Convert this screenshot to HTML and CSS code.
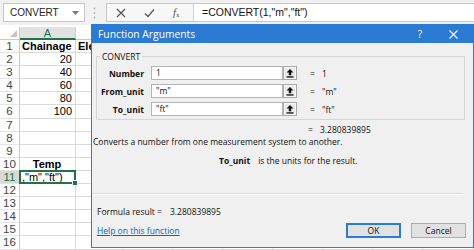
FILE: index.html
```html
<!DOCTYPE html>
<html>
<head>
<meta charset="utf-8">
<link rel="stylesheet" href="styles.css">
</head>
<body>
<div class="app">
  <div class="toolbar">
    <div class="namebox">
      <span class="nb-text">CONVERT</span>
      <svg class="caret" width="7" height="4" viewBox="0 0 7 4"><path d="M0 0H7L3.5 4Z" fill="#7a7a7a"/></svg>
    </div>
    <svg class="grip" width="3" height="12" viewBox="0 0 3 12"><circle cx="1.5" cy="1.5" r="0.9" fill="#b0b0b0"/><circle cx="1.5" cy="6" r="0.9" fill="#b0b0b0"/><circle cx="1.5" cy="10.5" r="0.9" fill="#b0b0b0"/></svg>
    <div class="fbar">
      <div class="fbtns">
        <svg class="fb-x" width="10" height="10" viewBox="0 0 10 10"><path d="M1 1L9 9M9 1L1 9" stroke="#555" stroke-width="1.2"/></svg>
        <svg class="fb-ok" width="11" height="10" viewBox="0 0 11 10"><path d="M1 5.5L4 8.5L10 1.5" stroke="#555" stroke-width="1.2" fill="none"/></svg>
        <span class="fx"><i>f</i><sub>x</sub></span>
      </div>
      <div class="formula">=CONVERT(1,"m","ft")</div>
    </div>
  </div>

  <div class="sheet">
    <div class="row head">
      <div class="corner"><svg width="7" height="7" viewBox="0 0 7 7"><path d="M7 0V7H0Z" fill="#c4c4c4"/></svg></div>
      <div class="ch ca selcol">A</div>
      <div class="ch cb"></div>
      <div class="rest"></div>
    </div>
    <div class="row"><div class="rh">1</div><div class="cell ca bold">Chainage</div><div class="cell cb bold">Ele</div><div class="rest"></div></div>
    <div class="row"><div class="rh">2</div><div class="cell ca num">20</div><div class="cell cb"></div><div class="rest"></div></div>
    <div class="row"><div class="rh">3</div><div class="cell ca num">40</div><div class="cell cb"></div><div class="rest"></div></div>
    <div class="row"><div class="rh">4</div><div class="cell ca num">60</div><div class="cell cb"></div><div class="rest"></div></div>
    <div class="row"><div class="rh">5</div><div class="cell ca num">80</div><div class="cell cb"></div><div class="rest"></div></div>
    <div class="row"><div class="rh">6</div><div class="cell ca num">100</div><div class="cell cb"></div><div class="rest"></div></div>
    <div class="row"><div class="rh">7</div><div class="cell ca"></div><div class="cell cb"></div><div class="rest"></div></div>
    <div class="row"><div class="rh">8</div><div class="cell ca"></div><div class="cell cb"></div><div class="rest"></div></div>
    <div class="row"><div class="rh">9</div><div class="cell ca"></div><div class="cell cb"></div><div class="rest"></div></div>
    <div class="row"><div class="rh">10</div><div class="cell ca bold center">Temp</div><div class="cell cb"></div><div class="rest"></div></div>
    <div class="row"><div class="rh selrow">11</div><div class="cell ca sel">,"m","ft")</div><div class="cell cb"></div><div class="rest"></div></div>
    <div class="row"><div class="rh">12</div><div class="cell ca"></div><div class="cell cb"></div><div class="rest"></div></div>
    <div class="row"><div class="rh">13</div><div class="cell ca"></div><div class="cell cb"></div><div class="rest"></div></div>
    <div class="row"><div class="rh">14</div><div class="cell ca"></div><div class="cell cb"></div><div class="rest"></div></div>
    <div class="row"><div class="rh">15</div><div class="cell ca"></div><div class="cell cb"></div><div class="rest"></div></div>
    <div class="row"><div class="rh">16</div><div class="cell ca"></div><div class="cell cb"></div><div class="rest"></div></div>
  </div>

  <div class="dialog">
    <div class="titlebar">
      <span class="title">Function Arguments</span>
      <span class="tbtn">?</span>
      <span class="tbtn"><svg width="9" height="9" viewBox="0 0 9 9"><path d="M0.5 0.5L8.5 8.5M8.5 0.5L0.5 8.5" stroke="#fff" stroke-width="1.1"/></svg></span>
    </div>
    <div class="dbody">
      <fieldset class="group">
        <legend>CONVERT</legend>
        <div class="args">
          <div class="alabel">Number</div>
          <div class="ainput">1</div>
          <div class="refbtn"><svg width="8" height="9" viewBox="0 0 8 9"><path d="M4 0L7.5 3.6H5.2V6.2H2.8V3.6H0.5Z" fill="#111"/><rect x="0.5" y="7.3" width="7" height="1.3" fill="#111"/></svg></div>
          <div class="aval"><span class="eq">=</span>1</div>

          <div class="alabel">From_unit</div>
          <div class="ainput">"m"</div>
          <div class="refbtn"><svg width="8" height="9" viewBox="0 0 8 9"><path d="M4 0L7.5 3.6H5.2V6.2H2.8V3.6H0.5Z" fill="#111"/><rect x="0.5" y="7.3" width="7" height="1.3" fill="#111"/></svg></div>
          <div class="aval"><span class="eq">=</span>"m"</div>

          <div class="alabel">To_unit</div>
          <div class="ainput">"ft"</div>
          <div class="refbtn"><svg width="8" height="9" viewBox="0 0 8 9"><path d="M4 0L7.5 3.6H5.2V6.2H2.8V3.6H0.5Z" fill="#111"/><rect x="0.5" y="7.3" width="7" height="1.3" fill="#111"/></svg></div>
          <div class="aval"><span class="eq">=</span>"ft"</div>
        </div>
      </fieldset>
      <div class="total"><span class="eq">=</span>3.280839895</div>
      <div class="desc">Converts a number from one measurement system to another.</div>
      <div class="pdesc"><b>To_unit</b>is the units for the result.</div>
      <div class="sep"></div>
      <div class="fresult"><span class="frl">Formula result =</span>3.280839895</div>
      <div class="footer">
        <a class="help">Help on this function</a>
        <div class="btns">
          <button class="btn default">OK</button>
          <button class="btn">Cancel</button>
        </div>
      </div>
    </div>
  </div>
</div>
</body>
</html>
```

FILE: styles.css
```css
html, body {
  margin: 0;
  padding: 0;
  background: #ffffff;
}
.app {
  position: relative;
  width: 474px;
  height: 250px;
  overflow: hidden;
  font-family: "Liberation Sans", Arial, sans-serif;
}

/* ---------- formula toolbar ---------- */
.toolbar {
  height: 25px;
  background: #f1f1f1;
  display: flex;
  align-items: flex-start;
  padding-top: 3px;
  box-sizing: border-box;
}
.namebox {
  margin-left: 3px;
  width: 82px;
  height: 19px;
  box-sizing: border-box;
  border: 1px solid #c6c6c6;
  background: #fff;
  display: flex;
  align-items: center;
  padding: 0 5px 0 6px;
}
.nb-text {
  flex: 1;
  font-size: 10px;
  color: #222;
}
.grip {
  margin: 4px 0 0 8px;
}
.fbar {
  margin-left: 10px;
  flex: 1;
  height: 19px;
  box-sizing: border-box;
  border: 1px solid #c6c6c6;
  border-right: none;
  background: #fff;
  display: flex;
}
.fbtns {
  width: 86px;
  display: flex;
  align-items: center;
  padding-left: 9px;
  box-sizing: border-box;
  background: #f7f7f7;
}
.fb-x { margin-right: 18px; }
.fb-ok { margin-right: 18px; }
.fx {
  font-family: "Liberation Serif", serif;
  font-size: 11px;
  color: #555;
}
.fx sub { font-size: 7px; vertical-align: -1px; }
.formula {
  flex: 1;
  border-left: 1px solid #d4d4d4;
  padding-left: 8px;
  font-size: 10.5px;
  line-height: 17px;
  color: #111;
}

/* ---------- sheet ---------- */
.sheet {
  padding-top: 2px;
}
.row {
  display: flex;
  height: 13.1px;
}
.row.head {
  height: 13px;
}
.corner {
  width: 20px;
  flex: none;
  box-sizing: border-box;
  border-right: 1px solid #c8c8c8;
  border-bottom: 1px solid #c8c8c8;
  display: flex;
  align-items: flex-end;
  justify-content: flex-end;
  padding: 0 2px 2px 0;
}
.corner svg { display: block; }
.ch {
  box-sizing: border-box;
  border-right: 1px solid #d4d4d4;
  border-bottom: 1px solid #c8c8c8;
  text-align: center;
  font-size: 11px;
  line-height: 12px;
  color: #444;
  flex: none;
}
.ch.selcol {
  background: #e1e1e1;
  color: #217346;
  border-bottom: 2px solid #217346;
}
.rh {
  width: 20px;
  flex: none;
  box-sizing: border-box;
  border-right: 1px solid #c8c8c8;
  border-bottom: 1px solid #e4e4e4;
  text-align: center;
  font-size: 11.5px;
  line-height: 12.5px;
  color: #444;
}
.rh.selrow {
  background: #d8d8d8;
  color: #217346;
}
.cell {
  flex: none;
  box-sizing: border-box;
  border-right: 1px solid #dadada;
  border-bottom: 1px solid #dadada;
  font-size: 11px;
  line-height: 12.5px;
  padding: 0 3px 0 2px;
  white-space: nowrap;
  overflow: hidden;
  color: #000;
}
.ca { width: 56px; }
.cb { width: 47px; }
.bold { font-weight: bold; }
.num { text-align: right; }
.center { text-align: center; }
.rest {
  flex: 1;
  box-sizing: border-box;
  border-bottom: 1px solid #dadada;
  background: repeating-linear-gradient(to right, transparent 0 49px, #dadada 49px 50px);
}
.row.head .rest {
  border-bottom: 1px solid #c8c8c8;
  background: repeating-linear-gradient(to right, transparent 0 49px, #d4d4d4 49px 50px);
}
.cell.sel {
  position: relative;
  overflow: visible;
}
.cell.sel::before {
  content: "";
  position: absolute;
  left: -1px;
  top: -1px;
  right: -1px;
  bottom: -1px;
  border: 2px solid #217346;
}
.cell.sel::after {
  content: "";
  position: absolute;
  right: -3px;
  bottom: -3px;
  width: 4px;
  height: 4px;
  background: #217346;
  border: 1px solid #fff;
}

/* ---------- dialog ---------- */
.dialog {
  position: absolute;
  left: 91px;
  top: 24px;
  width: 383px;
  height: 224px;
  box-sizing: border-box;
  border: 1px solid #2b7bd4;
  background: #f0f0f0;
  font-family: "Open Sans", "Noto Sans", sans-serif;
  font-size: 8.5px;
  color: #111;
  display: flex;
  flex-direction: column;
}
.titlebar {
  height: 18px;
  flex: none;
  background: #2b7bd4;
  color: #fff;
  display: flex;
  align-items: center;
  padding: 0 6px 0 6px;
  font-size: 10.3px;
}
.title { flex: 1; }
.tbtn {
  width: 28px;
  text-align: center;
  font-size: 10px;
  display: flex;
  justify-content: center;
  align-items: center;
}
.tbtn + .tbtn { margin-left: 5px; }
.dbody {
  flex: 1;
  display: flex;
  flex-direction: column;
}
.group {
  margin: 8px 8px 0 4px;
  border: 1px solid #d6d6d6;
  padding: 4px 0 3px 0;
  min-width: 0;
}
.group legend {
  margin-left: 3px;
  padding: 0 2px;
  font-size: 8.5px;
  line-height: 11px;
}
.args {
  display: grid;
  grid-template-columns: 54px 132px 14px auto;
  grid-auto-rows: 14px;
  row-gap: 4px;
  align-items: center;
}
.alabel {
  text-align: right;
  padding-right: 7px;
  font-weight: bold;
}
.ainput {
  height: 14px;
  box-sizing: border-box;
  border: 1px solid #b4b4b4;
  background: #fff;
  padding-left: 4px;
  line-height: 12px;
}
.refbtn {
  height: 14px;
  box-sizing: border-box;
  border: 1px solid #a8a8a8;
  background: #e9e9e9;
  box-shadow: inset 0 0 0 1px #f8f8f8;
  display: flex;
  align-items: center;
  justify-content: center;
}
.refbtn svg { display: block; }
.aval {
  padding-left: 13px;
}
.eq {
  display: inline-block;
  width: 12px;
}
.total {
  margin-top: 4px;
  padding-left: 216px;
  line-height: 12px;
}
.desc {
  padding-left: 1px;
  line-height: 11px;
}
.pdesc {
  margin-top: 8px;
  padding-left: 127px;
  line-height: 11px;
}
.pdesc b {
  margin-right: 8px;
}
.sep {
  margin: 27px 10px 0 0;
  height: 0;
  border-top: 1px solid #dcdcdc;
  border-bottom: 1px solid #fafafa;
}
.fresult {
  margin-top: 11px;
  padding-left: 5px;
  line-height: 11px;
}
.frl {
  display: inline-block;
  width: 73px;
}
.footer {
  margin-top: 6px;
  display: flex;
  align-items: center;
  padding: 0 7px 0 5px;
}
.help {
  flex: 1;
  color: #0066cc;
  text-decoration: underline;
}
.btns {
  display: flex;
  gap: 10px;
}
.btn {
  width: 55px;
  height: 15px;
  box-sizing: border-box;
  margin: 0;
  padding: 0;
  border: 1px solid #adadad;
  background: #e1e1e1;
  font-family: "Open Sans", "Noto Sans", sans-serif;
  font-size: 8.5px;
  color: #111;
  line-height: 13px;
}
.btn.default {
  border: 1px solid #2b7bd4;
  box-shadow: inset 0 0 0 1px #2b7bd4;
}
```
